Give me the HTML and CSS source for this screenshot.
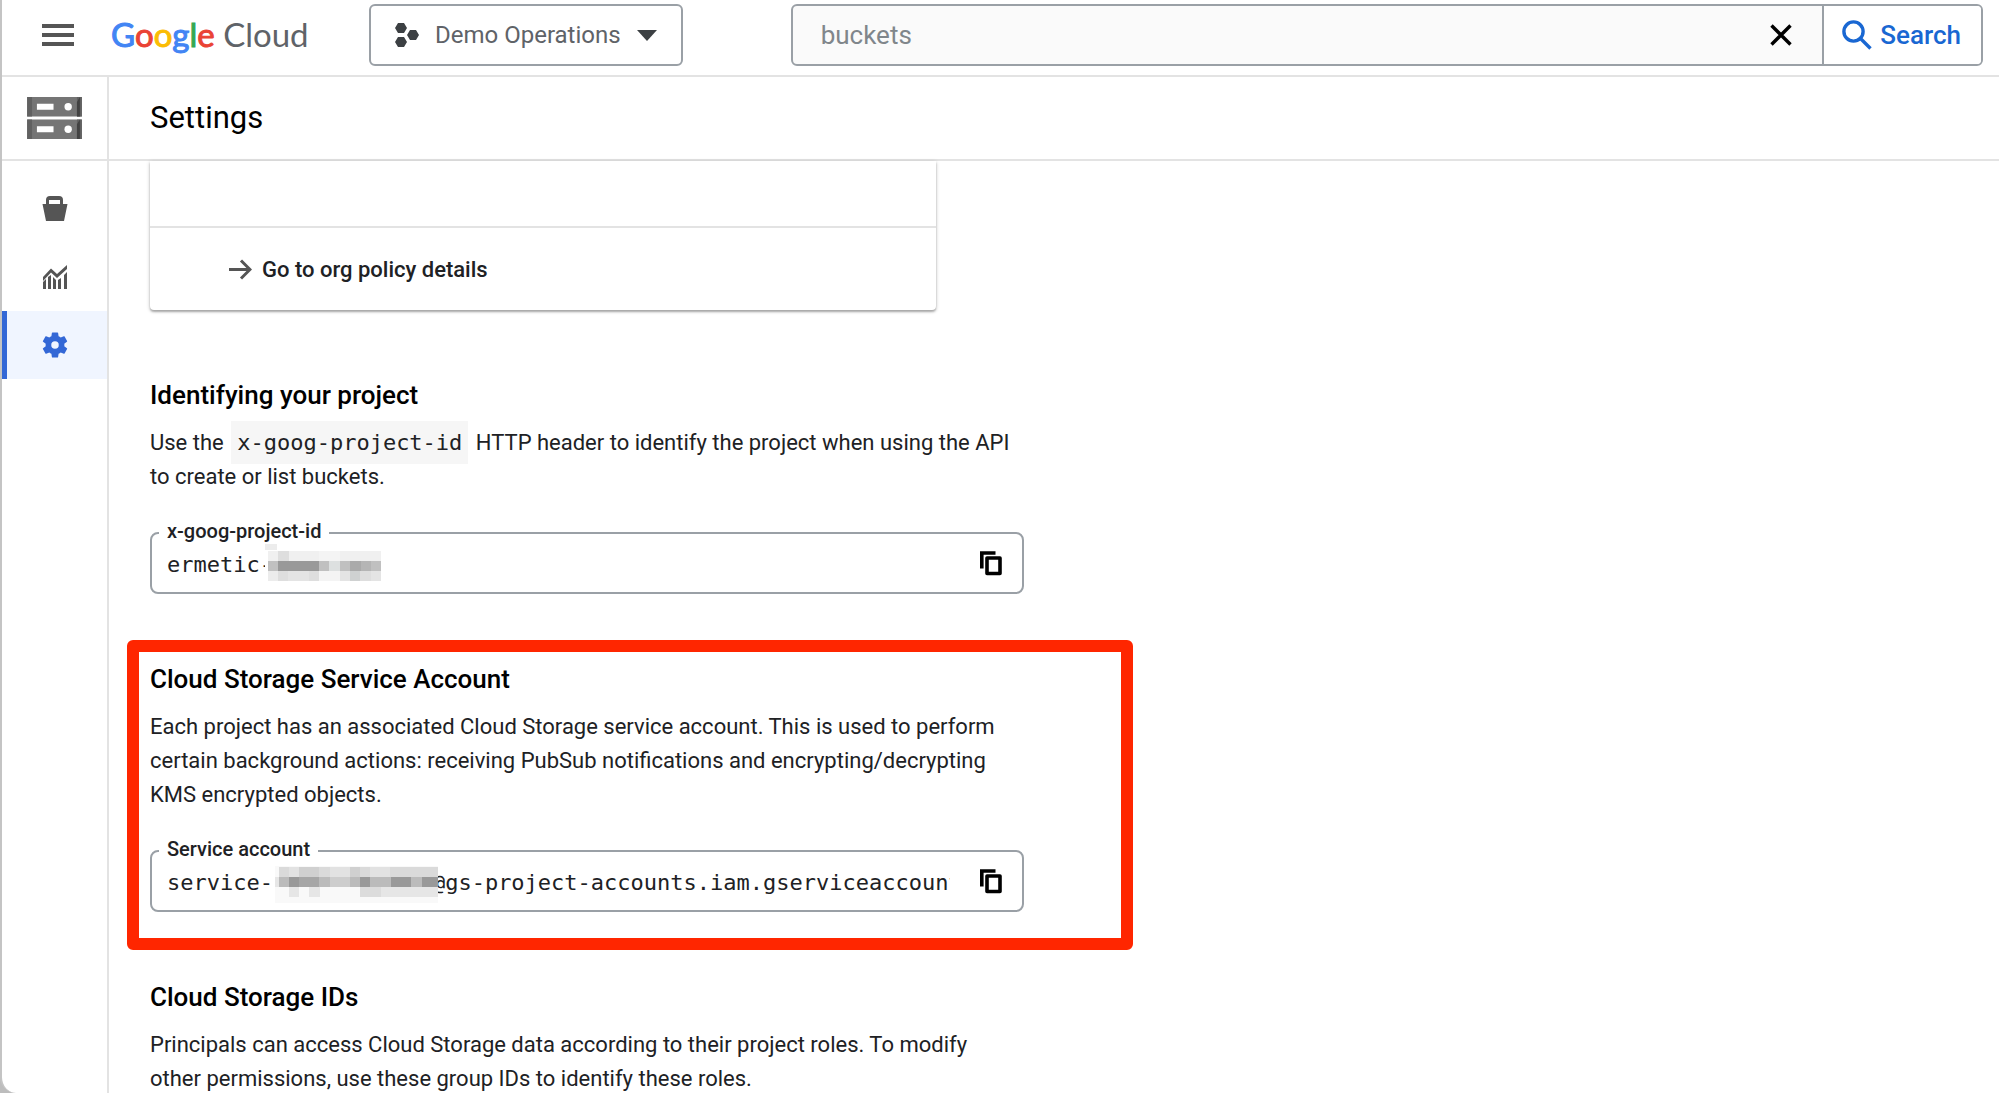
FILE: index.html
```html
<!DOCTYPE html>
<html lang="en">
<head>
<meta charset="utf-8">
<title>Settings – Cloud Storage – Google Cloud</title>
<link rel="stylesheet" href="styles.css">
</head>
<body>
<div class="app">
  <header class="topbar">
    <button class="icon-button menu" type="button" aria-label="Main menu">
      <svg width="32" height="22" viewBox="0 0 32 22" fill="#555"><path d="M0 0h32v4H0zM0 9h32v4H0zM0 18h32v4H0z"/></svg>
    </button>
    <a class="logo" href="#"><span class="g-blue">G</span><span class="g-red">o</span><span class="g-yellow">o</span><span class="g-blue">g</span><span class="g-green">l</span><span class="g-red">e</span> <span class="cloud">Cloud</span></a>
    <button class="project" type="button">
      <svg width="24" height="26" viewBox="0 0 24 26" fill="#3c4043"><path d="M3 1h6l3 5-3 5H3L0 6zM3 15h6l3 5-3 5H3l-3-5zM15 8h6l3 5-3 5h-6l-3-5z"/></svg>
      <span>Demo Operations</span>
      <svg width="20" height="11" viewBox="0 0 20 11" fill="#3c4043"><path d="M0 0h20L10 11z"/></svg>
    </button>
    <form class="search" role="search">
      <input class="search-input" type="text" value="buckets" aria-label="Search">
      <button class="icon-button clear" type="button" aria-label="Clear search">
        <svg width="22" height="22" viewBox="0 0 22 22" fill="none" stroke="#000" stroke-width="3.4"><path d="M1.500 1.500l19 19M20.500 1.500l-19 19"/></svg>
      </button>
      <button class="search-submit" type="button">
        <svg width="30" height="30" viewBox="0 0 30 30" fill="none" stroke="#1967d2" stroke-width="3.400"><circle cx="11.500" cy="11.500" r="9.600"/><path d="M18.500 18.500l10 10"/></svg>
        <span>Search</span>
      </button>
    </form>
  </header>
  <div class="body">
    <nav class="rail" aria-label="Cloud Storage">
      <a class="product" href="#" aria-label="Cloud Storage">
        <svg width="55" height="42" viewBox="0 0 56 43">
          <path fill="#757575" d="M0 0h56v20H0zM0 23h56v20H0z"/>
          <path fill="#616161" d="M0 0h5v20H0zM0 23h5v20H0zM51 0h5v20h-5zM51 23h5v20h-5z"/>
          <path fill="#424242" d="M51 5l3-5v20h-3zM51 28l3-5v20h-3z"/>
          <path fill="#fff" d="M10 7h17v6H10zM10 30h17v6H10z"/>
          <circle cx="42" cy="10" r="3.800" fill="#fff"/><circle cx="42" cy="33" r="3.800" fill="#fff"/>
        </svg>
      </a>
      <div class="rail-items">
        <a class="rail-item" href="#" aria-label="Buckets">
          <svg width="26" height="26" viewBox="0 0 26 26" fill="#555"><path fill-rule="evenodd" d="M4 8V4q0-4 4-4h9q4 0 4 4v4h4.500L22 25H4L.5 8zM7 8h11V4H7z"/></svg>
        </a>
        <a class="rail-item" href="#" aria-label="Monitoring">
          <svg width="26" height="26" viewBox="0 0 26 26" fill="#555"><path d="M1 21h3v4H1zM1 19v-1l3-3v10H1zM6 13l3-2v14H6zM11 13l3 3v9h-3zM16 16l3-2v11h-3zM22 11l3-3v17h-3z"/><path d="M1 13l8-8.500 6 5.500L25 1v4L15 14 9 8.500 1 17z"/></svg>
        </a>
        <a class="rail-item active" href="#" aria-label="Settings" aria-current="page">
          <svg width="30" height="30" viewBox="0 0 24 24" fill="#3367d6"><path d="M19.430 12.980c.04-.32.07-.64.07-.98s-.03-.66-.07-.98l2.110-1.650c.19-.15.24-.42.12-.64l-2-3.460c-.12-.22-.39-.3-.61-.22l-2.490 1c-.52-.4-1.080-.73-1.690-.98l-.38-2.650C14.460 2.180 14.250 2 14 2h-4c-.25 0-.46.18-.49.42l-.38 2.650c-.61.25-1.170.59-1.690.98l-2.490-1c-.23-.09-.49 0-.61.22l-2 3.460c-.13.22-.07.49.12.64l2.110 1.650c-.04.32-.07.65-.07.98s.03.66.07.98l-2.110 1.650c-.19.15-.24.42-.12.64l2 3.460c.12.22.39.3.61.22l2.490-1c.52.4 1.080.73 1.690.98l.38 2.650c.03.24.24.42.49.42h4c.25 0 .46-.18.49-.42l.38-2.650c.61-.25 1.170-.59 1.690-.98l2.490 1c.23.09.49 0 .61-.22l2-3.460c.12-.22.07-.49-.12-.64l-2.110-1.650zM12 15a3 3 0 1 1 0-6 3 3 0 0 1 0 6z"/></svg>
        </a>
      </div>
    </nav>
    <main class="main">
      <h1 class="title">Settings</h1>
      <div class="content">
        <div class="card">
          <div class="card-body"></div>
          <a class="card-link" href="#">
            <svg width="23" height="21" viewBox="0 0 23 21" fill="none" stroke="#555" stroke-width="3"><path d="M0 10.500h20M12 1.500l9 9-9 9"/></svg>
            <span>Go to org policy details</span>
          </a>
        </div>
        <section class="section">
          <h2>Identifying your project</h2>
          <p>Use the <code>x-goog-project-id</code> HTTP header to identify the project when using the API to create or list buckets.</p>
          <div class="field">
            <label for="project-id">x-goog-project-id</label>
            <input id="project-id" type="text" value="ermetic-" readonly>
            <button class="icon-button copy" type="button" aria-label="Copy project ID">
              <svg width="22" height="25" viewBox="0 0 22 25" fill="none" stroke="#000" stroke-width="3.600"><path d="M1.800 17.500V2h13.700"/><path stroke-linejoin="round" d="M7 7h13v15.500H7z"/></svg>
            </button>
            <svg class="mask mask-id" width="116" height="38" viewBox="0 0 116 38" shape-rendering="crispEdges" aria-hidden="true">
              <path fill="#fff" d="M0 7h116v31H0z"/>
              <path fill="#ececec" d="M0 0h12v6H0zM3 27h10v10H3z"/>
              <path fill="#f0f0f0" d="M3 7h10v10H3zM24 7h30v10H24zM75 7h41v10H75z"/>
              <path fill="#dedede" d="M13 7h11v10H13zM13 27h10v10H13zM44 27h10v10H44zM95 27h11v10H95z"/>
              <path fill="#e4e4e4" d="M23 27h21v10H23zM75 27h10v10H75zM106 27h10v10h-10z"/>
              <path fill="#f4f4f4" d="M54 7h21v10H54zM54 27h21v10H54z"/>
              <path fill="#c0c0c0" d="M3 17h10v10H3zM54 17h10v10H54zM75 17h10v10H75zM106 17h10v10h-10z"/>
              <path fill="#999" d="M13 17h41v10H13z"/>
              <path fill="#dde0e0" d="M64 17h11v10H64z"/>
              <path fill="#aaa" d="M85 17h11v10H85z"/>
              <path fill="#b5b5b5" d="M96 17h10v10H96z"/>
              <path fill="#cfd1d1" d="M85 27h10v10H85z"/>
            </svg>
          </div>
        </section>
        <section class="section highlighted">
          <h2>Cloud Storage Service Account</h2>
          <p>Each project has an associated Cloud Storage service account. This is used to perform certain background actions: receiving PubSub notifications and encrypting/decrypting KMS encrypted objects.</p>
          <div class="field">
            <label for="service-account">Service account</label>
            <input id="service-account" type="text" value="service-            @gs-project-accounts.iam.gserviceaccount.com" readonly>
            <button class="icon-button copy" type="button" aria-label="Copy service account">
              <svg width="22" height="25" viewBox="0 0 22 25" fill="none" stroke="#000" stroke-width="3.600"><path d="M1.800 17.500V2h13.700"/><path stroke-linejoin="round" d="M7 7h13v15.500H7z"/></svg>
            </button>
            <svg class="mask mask-account" width="163" height="37" viewBox="0 0 163 37" shape-rendering="crispEdges" aria-hidden="true">
              <path fill="#f9f9f9" d="M0 0h163v37H0z"/>
              <path fill="#dadada" d="M4 1h159v10H4z"/>
              <path fill="#e2e2e2" d="M14 1h10v10H14zM55 1h20v10H55zM95 1h20v10H95z"/>
              <path fill="#d0d0d0" d="M24 1h20v10H24zM75 1h10v10H75z"/>
              <path fill="#bbb" d="M4 11h159v10H4z"/>
              <path fill="#e6e6e6" d="M0 11h4v10H0z"/>
              <path fill="#999" d="M14 11h10v10H14zM85 11h10v10H85zM116 11h20v10h-20zM147 11h16v10h-16z"/>
              <path fill="#a6a6a6" d="M24 11h20v10H24z"/>
              <path fill="#cdcdcd" d="M55 11h20v10H55z"/>
              <path fill="#e6e6e6" d="M14 21h10v10H14zM34 21h11v10H34zM106 21h57v10h-57z"/>
              <path fill="#dcdcdc" d="M85 21h21v10H85z"/>
            </svg>
          </div>
        </section>
        <section class="section">
          <h2>Cloud Storage IDs</h2>
          <p>Principals can access Cloud Storage data according to their project roles. To modify other permissions, use these group IDs to identify these roles.</p>
        </section>
      </div>
    </main>
  </div>
</div>
</body>
</html>
```
FILE: styles.css
```css
* { box-sizing: border-box; }

body {
  margin: 0;
  background: #bdbdbd;
  color: #202124;
  font-family: Roboto, "Liberation Sans", sans-serif;
  font-size: 22px;
}

button {
  font: inherit;
  cursor: pointer;
}

a { color: inherit; text-decoration: none; }
svg { display: block; flex: none; }

.app {
  display: flex;
  flex-direction: column;
  height: 100vh;
  overflow: hidden;
  border-left: 2px solid #c4c4c4;
  border-bottom-left-radius: 16px;
  background: #fff;
}

.icon-button {
  display: flex;
  align-items: center;
  justify-content: center;
  padding: 0;
  border: 0;
  background: none;
}

/* Top bar */
.topbar {
  display: flex;
  align-items: center;
  flex: none;
  height: 77px;
  padding: 0 16px 5px 40px;
  border-bottom: 2px solid #e3e3e3;
}

.logo {
  width: 200px;
  margin-left: 37px;
  padding-bottom: 2px;
  color: #5f6368;
  font-family: Lato, "Open Sans", sans-serif;
  font-size: 33px;
  line-height: 48px;
  white-space: nowrap;
}

.g-blue { color: #4285f4; }
.g-red { color: #ea4335; }
.g-yellow { color: #fbbc04; }
.g-green { color: #34a853; }
.g-blue, .g-red, .g-yellow, .g-green { -webkit-text-stroke: 1px currentColor; }

.project {
  display: flex;
  align-items: center;
  gap: 16px;
  height: 62px;
  margin-left: 58px;
  padding: 0 24px;
  border: 2px solid #9aa0a6;
  border-radius: 6px;
  background: #fff;
  color: #5f6368;
  font-size: 24px;
  white-space: nowrap;
}

.search {
  display: flex;
  flex: 1;
  height: 62px;
  margin-left: 108px;
  border: 2px solid #9aa0a6;
  border-radius: 6px;
  background: #fafafa;
  overflow: hidden;
}

.search-input {
  flex: 1;
  min-width: 0;
  padding: 0 28px;
  border: 0;
  background: none;
  color: #80868b;
  font: inherit;
  font-size: 26px;
}

.clear { width: 82px; }

.search-submit {
  display: flex;
  align-items: center;
  gap: 8px;
  padding: 0 20px 0 18px;
  border: 0;
  border-left: 2px solid #9aa0a6;
  background: #fff;
  color: #1967d2;
  font-size: 26px;
  font-weight: 500;
}

/* Side rail */
.body {
  display: flex;
  flex: 1;
  min-height: 0;
}

.rail {
  flex: none;
  width: 107px;
  border-right: 2px solid #e3e3e3;
}

.product {
  display: flex;
  align-items: center;
  justify-content: center;
  height: 84px;
  border-bottom: 2px solid #e3e3e3;
}

.rail-items { padding-top: 14px; }

.rail-item {
  display: flex;
  align-items: center;
  justify-content: center;
  height: 68px;
}

.rail-item.active {
  border-left: 5px solid #3367d6;
  padding-right: 5px;
  background: #f0f5ff;
}

/* Page content */
.main {
  flex: 1;
  min-width: 0;
  overflow: hidden;
}

.title {
  height: 84px;
  margin: 0;
  padding-left: 41px;
  border-bottom: 2px solid #e3e3e3;
  color: #000;
  font-size: 31px;
  font-weight: 400;
  line-height: 82px;
}

.content {
  max-width: 960px;
  padding-left: 41px;
}

.card {
  max-width: 786px;
  border-radius: 0 0 4px 4px;
  box-shadow: 0 2px 2px rgba(0, 0, 0, .25), 0 1px 4px rgba(0, 0, 0, .2);
}

.card-body {
  height: 67px;
  border-bottom: 2px solid #e3e3e3;
}

.card-link {
  display: flex;
  align-items: center;
  gap: 10px;
  height: 82px;
  padding-left: 79px;
  color: #202124;
  font-weight: 500;
}

.section {
  max-width: 874px;
  margin-top: 70px;
}

.section h2 {
  margin: 0 0 16px;
  color: #000;
  font-size: 26px;
  font-weight: 500;
  line-height: 30px;
}

.section p {
  max-width: 868px;
  margin: 0;
  line-height: 34px;
}

.section code {
  margin: 0 2px;
  padding: 9px 6px;
  background: #f6f6f6;
  font-family: "DejaVu Sans Mono", monospace;
  font-size: 22px;
  line-height: 24px;
}

.field {
  position: relative;
  display: flex;
  height: 62px;
  margin-top: 38px;
  border: 2px solid #9aa0a6;
  border-radius: 8px;
}

.field label {
  position: absolute;
  top: -17px;
  left: 7px;
  padding: 0 8px;
  background: #fff;
  font-size: 20px;
  font-weight: 500;
  line-height: 28px;
}

.field input {
  flex: 1;
  min-width: 0;
  margin: 2px 0 0 15px;
  padding: 0;
  border: 0;
  outline: 0;
  background: none;
  color: #202124;
  font-family: "DejaVu Sans Mono", monospace;
  font-size: 22px;
}

.copy {
  width: 22px;
  margin: 0 20px 0 30px;
}

/* Pixelated cover over the private part of a value */
.mask { position: absolute; }
.mask-id { top: 10px; left: 113px; }
.mask-account { top: 14px; left: 123px; }

/* Red callout frame around a section */
.highlighted { position: relative; }

.highlighted::after {
  content: "";
  position: absolute;
  inset: -24px -109px -38px -23px;
  border: 12px solid #ff2600;
  border-radius: 6px;
  pointer-events: none;
}
```
